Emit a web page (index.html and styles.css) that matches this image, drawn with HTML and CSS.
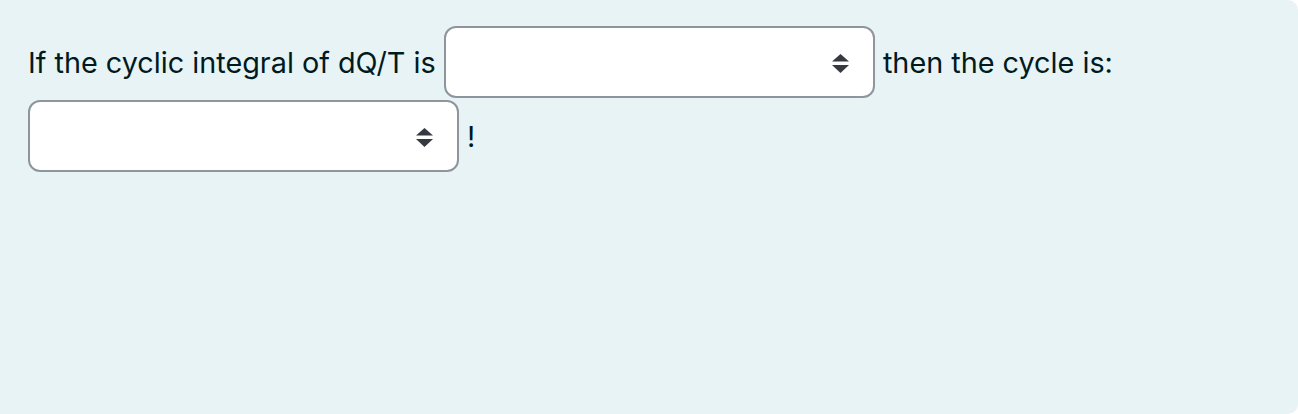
FILE: index.html
```html
<!DOCTYPE html>
<html lang="en">
<head>
    <meta charset="UTF-8">
    <meta name="viewport" content="width=device-width, initial-scale=1.0">
    <title>Question</title>
    <link rel="stylesheet" href="styles.css">
</head>
<body>
    <div class="formulation">
        <p class="qtext">If the cyclic integral of dQ/T is
            <span class="pick">
                <select class="choice"><option></option></select>
                <svg class="caret" viewBox="0 0 17 19"><path d="M8.5 0 L17 7.5 H0 Z M0 11 H17 L8.5 19 Z"/></svg>
            </span>
            then the cycle is:
            <span class="pick">
                <select class="choice"><option></option></select>
                <svg class="caret" viewBox="0 0 17 19"><path d="M8.5 0 L17 7.5 H0 Z M0 11 H17 L8.5 19 Z"/></svg>
            </span>
            !
        </p>
    </div>
</body>
</html>
```
FILE: styles.css
```css
*{
    margin: 0;
    padding: 0;
    box-sizing: border-box;
}

body{
    width: 1298px;
    height: 414px;
    overflow: hidden;
    background-color: #fff;
}

.formulation{
    height: 414px;
    background-color: #e7f3f5;
    border-radius: 0 10px 10px 0;
    padding: 26px 28px;
    color: #001a1e;
    font-family: Inter, "Noto Sans", sans-serif;
    font-size: 28.8px;
}

.qtext{
    line-height: 74px;
}

.pick{
    position: relative;
    display: inline-block;
    vertical-align: top;
    height: 72px;
}

.choice{
    appearance: none;
    -webkit-appearance: none;
    width: 431px;
    height: 72px;
    background-color: #fff;
    border: 2px solid #8f959e;
    border-radius: 12px;
    font: inherit;
    color: inherit;
}

.caret{
    position: absolute;
    right: 26px;
    top: 28px;
    width: 17px;
    height: 19px;
    fill: #343a40;
    pointer-events: none;
}
```
